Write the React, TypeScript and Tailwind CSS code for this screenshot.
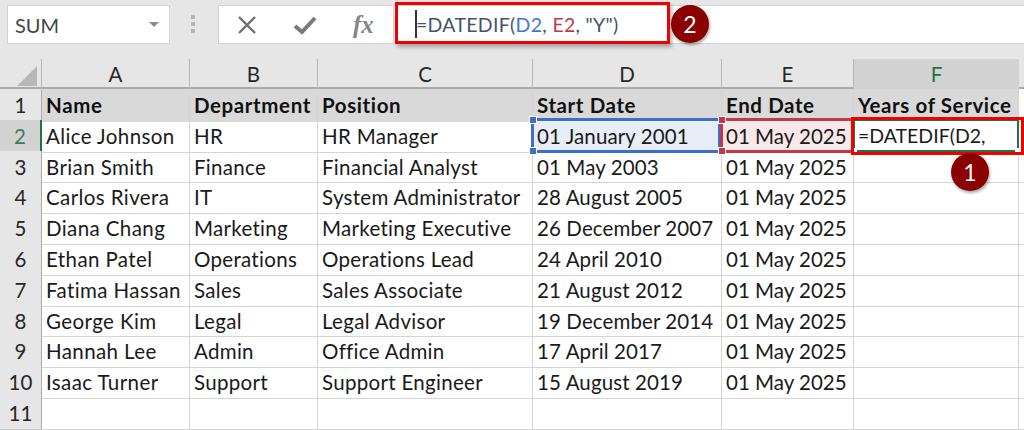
const columns = ["A", "B", "C", "D", "E", "F"]

const rows = [
  ["Name", "Department", "Position", "Start Date", "End Date", "Years of Service"],
  ["Alice Johnson", "HR", "HR Manager", "01 January 2001", "01 May 2025", ""],
  ["Brian Smith", "Finance", "Financial Analyst", "01 May 2003", "01 May 2025", ""],
  ["Carlos Rivera", "IT", "System Administrator", "28 August 2005", "01 May 2025", ""],
  ["Diana Chang", "Marketing", "Marketing Executive", "26 December 2007", "01 May 2025", ""],
  ["Ethan Patel", "Operations", "Operations Lead", "24 April 2010", "01 May 2025", ""],
  ["Fatima Hassan", "Sales", "Sales Associate", "21 August 2012", "01 May 2025", ""],
  ["George Kim", "Legal", "Legal Advisor", "19 December 2014", "01 May 2025", ""],
  ["Hannah Lee", "Admin", "Office Admin", "17 April 2017", "01 May 2025", ""],
  ["Isaac Turner", "Support", "Support Engineer", "15 August 2019", "01 May 2025", ""],
  ["", "", "", "", "", ""],
]

const gridCols = "grid grid-cols-[42px_148px_128px_215px_189px_132px_165px_5px]"

// digits run wide in this font, so the date columns get less tracking
const colTracking = [
  "tracking-[0.4px]",
  "tracking-[0.3px]",
  "tracking-[0.3px]",
  "tracking-[0.1px]",
  "tracking-[0px]",
  "tracking-[0.3px]",
]

function Handle({ className }: { className: string }) {
  return <span className={`absolute h-[8px] w-[8px] border border-white ${className}`} />
}

function Badge({ n, className }: { n: number; className: string }) {
  return (
    <span
      className={`absolute flex h-[38px] w-[38px] items-center justify-center rounded-full bg-[#8b0000] text-[23px] text-white shadow-[1px_2px_3px_rgba(0,0,0,0.35)] ${className}`}
    >
      {n}
    </span>
  )
}

export default function App() {
  return (
    <div className="relative h-[430px] w-[1024px] overflow-hidden bg-white font-['Lato','Liberation_Sans',sans-serif] text-[20.5px] text-[#1a1a1a]">
      {/* formula bar */}
      <div className="flex h-[59px] bg-[#e6e6e6] pt-[5px]">
        <div className="ml-[7px] flex h-[39px] w-[163px] items-center justify-between border border-[#d4d4d4] bg-white pl-[7px] pr-[10px] text-[#444]">
          <span className="text-[20px]">SUM</span>
          <span className="h-0 w-0 border-x-[5px] border-t-[5px] border-x-transparent border-t-[#8a8a8a]" />
        </div>
        <div className="ml-[20px] mt-[10px] flex h-[18px] w-[6px] flex-col items-center justify-between">
          <span className="h-[4px] w-[4px] bg-[#b5b5b5]" />
          <span className="h-[4px] w-[4px] bg-[#b5b5b5]" />
          <span className="h-[4px] w-[4px] bg-[#b5b5b5]" />
        </div>
        <div className="ml-[22px] flex h-[39px] w-[176px] items-center border border-[#d4d4d4] bg-white">
          <svg width="22" height="20" viewBox="0 0 22 20" className="ml-[17px]">
            <path d="M3 2 L19 18 M19 2 L3 18" stroke="#6e6e6e" strokeWidth="2.4" fill="none" />
          </svg>
          <svg width="24" height="20" viewBox="0 0 24 20" className="ml-[35px]">
            <path d="M2 11 L9 17 L22 3" stroke="#7a7a7a" strokeWidth="4" fill="none" />
          </svg>
          <span className="ml-[36px] font-['Liberation_Serif',serif] text-[25px] font-bold italic leading-none text-[#858585]">
            fx
          </span>
        </div>
        <div className="flex h-[39px] flex-1 items-center border-y border-[#d4d4d4] bg-white pl-[22px] text-[19.5px] tracking-[0.3px] text-[#44546a]">
          <span>
            =DATEDIF(<span className="text-[#3f78c9]">D2</span>, <span className="text-[#c0394b]">E2</span>, "Y")
          </span>
        </div>
      </div>

      {/* sheet */}
      <div className={`${gridCols} h-[30px] border-b-2 border-[#ababab] bg-[#e6e6e6]`}>
        <div className="relative border-r border-[#b8b8b8]">
          <span className="absolute bottom-[4px] right-[4px] h-0 w-0 border-b-[20px] border-l-[20px] border-b-[#b7b7b7] border-l-transparent" />
        </div>
        {columns.map((c) => (
          <div
            key={c}
            className={
              c === "F"
                ? "-mb-[2px] flex items-center justify-center border-b-2 border-[#217346] bg-[#d2d2d2] text-[#217346]"
                : "flex items-center justify-center border-r border-[#b8b8b8] text-[#262626]"
            }
          >
            {c}
          </div>
        ))}
        <div />
      </div>
      {rows.map((row, r) => (
        <div key={r} className={`${gridCols} h-[30.8px]`}>
          <div
            className={
              r === 1
                ? "flex items-center justify-center border-b border-r-2 border-[#c6c6c6] border-r-[#217346] bg-[#d2d2d2] pt-[1px] text-[#3f7a5f]"
                : "flex items-center justify-center border-b border-r border-[#c6c6c6] border-r-[#ababab] bg-[#e6e6e6] pt-[1px] text-[#262626]"
            }
          >
            {r + 1}
          </div>
          {row.map((cell, c) => (
            <div
              key={c}
              className={`flex items-center overflow-visible whitespace-nowrap border-b border-r border-[#d4d4d4] pl-[4px] pt-[1px] ${
                r === 0 ? "bg-[#d9d9d9] font-bold tracking-[0.6px] text-[#111]" : colTracking[c]
              } ${r === 1 && c === 3 ? "bg-[#e8eef8]" : ""} ${r === 1 && c === 4 ? "bg-[#f9e8e8]" : ""}`}
            >
              {cell}
            </div>
          ))}
          <div className="border-b border-[#d4d4d4]" />
        </div>
      ))}

      {/* range highlights for D2 and E2 */}
      <div className="absolute left-[531px] top-[118px] h-[35px] w-[190px] border-[3px] border-[#3f6fc4]">
        <Handle className="-left-[5px] -top-[5px] bg-[#3f6fc4]" />
        <Handle className="-bottom-[5px] -left-[5px] bg-[#3f6fc4]" />
      </div>
      <div className="absolute left-[720px] top-[118px] h-[35px] w-[133px] border-y-[3px] border-l-[3px] border-[#c0394b]">
        <Handle className="-left-[5px] -top-[5px] bg-[#c0394b]" />
        <Handle className="-bottom-[5px] -left-[5px] bg-[#c0394b]" />
      </div>

      {/* active cell with its formula */}
      <div className="absolute left-[853px] top-[119px] flex h-[33px] w-[166px] items-center border-2 border-[#217346] bg-white pl-[3px] text-[19.5px]">
        =DATEDIF(D2,
        <span className="absolute -bottom-[2px] -left-[2px] h-[4px] w-[4px] bg-white" />
        <span className="absolute -bottom-[2px] -right-[2px] h-[4px] w-[4px] bg-white" />
      </div>

      {/* annotations */}
      <div className="absolute left-[851px] top-[117px] h-[38px] w-[173px] border-[3px] border-[#f00000]" />
      <div className="absolute left-[395px] top-[2px] h-[42px] w-[275px] border-[3px] border-[#f00000] shadow-[2px_3px_4px_rgba(0,0,0,0.3)]" />
      <span className="absolute left-[415px] top-[10px] h-[28px] w-[2px] bg-[#333]" />
      <Badge n={2} className="left-[671px] top-[5px]" />
      <Badge n={1} className="left-[951px] top-[153px]" />
    </div>
  )
}
